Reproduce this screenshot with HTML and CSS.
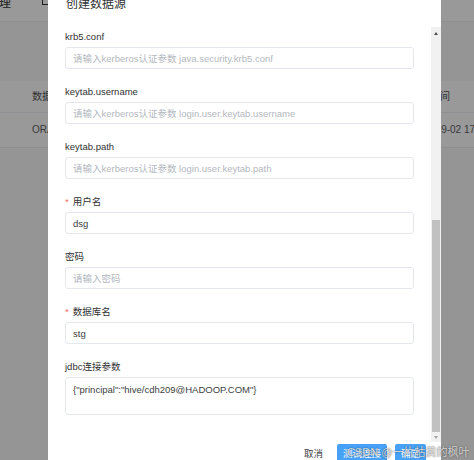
FILE: index.html
```html
<!DOCTYPE html>
<html lang="zh-CN">
<head>
<meta charset="utf-8">
<title>创建数据源</title>
<link rel="stylesheet" href="styles.css">
</head>
<body>
<div class="page">
  <div class="topbar">
    <span class="crumb">理</span>
    <span class="tab-icon"></span>
  </div>
  <div class="toolbar"></div>
  <div class="table">
    <div class="trow thead">
      <span></span><span>数据源名称</span><span>类型</span><span>创建时间</span>
    </div>
    <div class="trow tbody">
      <span></span><span>ORACLE</span><span>oracle</span><span>2022-09-02 17:21:10</span>
    </div>
  </div>
</div>
<div class="mask"></div>

<div class="dialog">
  <div class="dialog-header">创建数据源</div>
  <div class="dialog-main">
    <div class="dialog-body">
      <div class="form-item">
        <label class="form-label">krb5.conf</label>
        <input class="form-input" type="text" placeholder="请输入kerberos认证参数 java.security.krb5.conf">
      </div>
      <div class="form-item">
        <label class="form-label">keytab.username</label>
        <input class="form-input" type="text" placeholder="请输入kerberos认证参数 login.user.keytab.username">
      </div>
      <div class="form-item">
        <label class="form-label">keytab.path</label>
        <input class="form-input" type="text" placeholder="请输入kerberos认证参数 login.user.keytab.path">
      </div>
      <div class="form-item">
        <label class="form-label"><span class="req">*</span>用户名</label>
        <input class="form-input" type="text" value="dsg">
      </div>
      <div class="form-item">
        <label class="form-label">密码</label>
        <input class="form-input" type="password" placeholder="请输入密码">
      </div>
      <div class="form-item">
        <label class="form-label"><span class="req">*</span>数据库名</label>
        <input class="form-input" type="text" value="stg">
      </div>
      <div class="form-item">
        <label class="form-label">jdbc连接参数</label>
        <textarea class="form-textarea">{"principal":"hive/cdh209@HADOOP.COM"}</textarea>
      </div>
    </div>
    <div class="scrollbar">
      <div class="sb-btn sb-up"><span class="arrow-up"></span></div>
      <div class="sb-space"></div>
      <div class="sb-thumb"></div>
      <div class="sb-btn sb-down"><span class="arrow-down"></span></div>
    </div>
  </div>
  <div class="dialog-footer">
    <button class="btn btn-text" type="button">取消</button>
    <button class="btn btn-primary" type="button">测试连接</button>
    <button class="btn btn-primary" type="button">确定</button>
  </div>
</div>

<div class="watermark">CSDN @一片枯黄的枫叶</div>
</body>
</html>
```

FILE: styles.css
```css
html, body {
  margin: 0;
  padding: 0;
}

body {
  width: 474px;
  height: 460px;
  overflow: hidden;
  position: relative;
  background: #f8f8f8;
  font-family: "Liberation Sans", "Noto Sans CJK SC", sans-serif;
  color: #606266;
}

/* ---------- background page ---------- */
.page {
  display: flex;
  flex-direction: column;
}

.topbar {
  height: 22px;
  background: #ffffff;
  border-bottom: 1px solid #ebeef5;
  box-sizing: border-box;
  display: flex;
  align-items: flex-start;
}

.crumb {
  font-size: 12px;
  line-height: 12px;
  margin-top: -3px;
  margin-left: -1px;
  color: #303133;
}

.tab-icon {
  width: 10px;
  height: 10px;
  margin-left: 31px;
  margin-top: -5px;
  border: 1.5px solid #303133;
  box-sizing: border-box;
}

.toolbar {
  height: 59px;
}

.table {
  background: #ffffff;
}

.trow {
  display: grid;
  grid-template-columns: 32px 120px 258px 1fr;
  font-size: 10px;
  border-bottom: 1px solid #ebeef5;
  box-sizing: border-box;
  white-space: nowrap;
  overflow: hidden;
}

.thead {
  height: 32px;
  line-height: 31px;
  color: #505255;
}

.tbody {
  height: 35px;
  line-height: 34px;
}

.mask {
  position: absolute;
  inset: 0;
  background: rgba(0, 0, 0, 0.4);
}

/* ---------- dialog ---------- */
.dialog {
  position: absolute;
  left: 48px;
  top: -10px;
  width: 393px;
  height: 490px;
  background: #ffffff;
  display: flex;
  flex-direction: column;
}

.dialog-header {
  height: 37px;
  box-sizing: border-box;
  padding: 6px 0 0 18px;
  font-size: 12px;
  line-height: 16px;
  color: #303133;
}

.dialog-main {
  height: 415px;
  display: flex;
}

.dialog-body {
  flex: 1;
  padding: 0 17px;
  overflow: hidden;
}

.form-item {
  display: flex;
  flex-direction: column;
  margin-bottom: 13px;
}

.form-label {
  height: 20px;
  line-height: 20px;
  font-size: 9.5px;
  color: #303133;
}

.req {
  color: #f56c6c;
  margin-right: 4px;
}

.form-input,
.form-textarea {
  display: block;
  width: 100%;
  box-sizing: border-box;
  border: 1px solid #e4e7ed;
  border-radius: 3px;
  background: #ffffff;
  font-family: inherit;
  font-size: 9.5px;
  color: #3c3e42;
  outline: none;
  margin: 0;
}

.form-input {
  height: 22px;
  padding: 0 7px;
}

.form-textarea {
  height: 38px;
  padding: 5px 7px;
  line-height: 14px;
  resize: none;
  overflow: hidden;
}

.form-input::placeholder {
  color: #b4b8c0;
}

/* fake scrollbar */
.scrollbar {
  width: 10px;
  background: #f1f1f1;
  display: flex;
  flex-direction: column;
}

.sb-btn {
  height: 10px;
  display: flex;
  align-items: center;
  justify-content: center;
}

.sb-up {
  height: 13px;
}

.arrow-up {
  width: 0;
  height: 0;
  border-left: 2.5px solid transparent;
  border-right: 2.5px solid transparent;
  border-bottom: 3px solid #505050;
}

.arrow-down {
  width: 0;
  height: 0;
  border-left: 2.5px solid transparent;
  border-right: 2.5px solid transparent;
  border-top: 3px solid #a3a3a3;
}

.sb-space {
  flex: 1;
}

.sb-thumb {
  height: 212px;
  background: #c1c1c1;
  margin: 0 1px;
}

.dialog-footer {
  display: flex;
  justify-content: flex-end;
  gap: 8px;
  padding: 2px 15px 0 0;
}

.btn {
  height: 20px;
  padding: 0 6px;
  border: none;
  border-radius: 2px;
  font-family: inherit;
  font-size: 9.5px;
  line-height: 20px;
  align-self: flex-start;
}

.btn-text {
  background: transparent;
  color: #404246;
}

.btn-primary {
  background: #47a2f7;
  color: #ffffff;
}

.watermark {
  position: absolute;
  left: 347px;
  top: 444px;
  font-size: 11px;
  line-height: 16px;
  color: rgba(255, 255, 255, 0.8);
  text-shadow: 0 0 1px rgba(0, 0, 0, 0.55), 0 0 2px rgba(0, 0, 0, 0.3);
  white-space: nowrap;
}
```
